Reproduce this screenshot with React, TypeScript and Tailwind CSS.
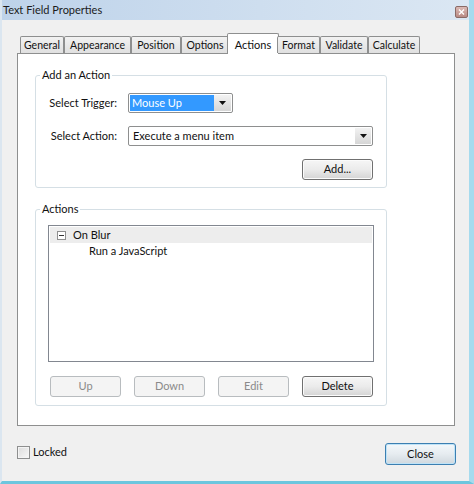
import React from "react";

const Arrow = () => (
  <svg width="7" height="4" viewBox="0 0 7 4">
    <path d="M0 0 H7 L3.5 4 Z" fill="#111" />
  </svg>
);

const Tab = ({ label, w }: { label: string; w: number }) => (
  <div
    style={{ width: w }}
    className="h-[17px] mb-[1px] border border-b-0 border-[#8e8f8f] rounded-t-[2px] bg-gradient-to-b from-[#f2f2f2] to-[#e0e0e0] flex items-center justify-center text-[10.5px] leading-none"
  >
    {label}
  </div>
);

const Btn = ({ label, disabled }: { label: string; disabled?: boolean }) =>
  disabled ? (
    <div className="w-[71px] h-[21px] border border-[#b8bcbf] rounded-[3px] bg-[#f4f4f4] flex items-center justify-center text-[#8a8a8a]">
      {label}
    </div>
  ) : (
    <div className="w-[71px] h-[21px] border border-[#707070] rounded-[3px] bg-gradient-to-b from-[#f6f6f6] via-[#ebebeb] to-[#d4d4d4] flex items-center justify-center shadow-[inset_0_0_0_1px_#fbfbfb]">
      {label}
    </div>
  );

export default function App() {
  return (
    <div className="w-[474px] h-[484px] bg-[#f0f0f0] flex flex-col font-[Lato,sans-serif] text-[11px] text-[#111] border-r-[5px] border-r-[#a6dbee] border-b-[3px] border-b-[#6cc6de] border-l-2 border-l-[#dbe6f0] overflow-hidden">
      {/* title bar */}
      <div className="h-[20px] shrink-0 bg-gradient-to-r from-[#bed3ea] to-[#dbe7f3] flex items-center justify-between pl-[1px] pr-[1px]">
        <span className="text-[11px] text-[#1b1b1b]">Text Field Properties</span>
        <div className="w-[13px] h-[12px] border border-[#8a6a66] rounded-[2px] bg-gradient-to-b from-[#dcbab5] to-[#b88a84] flex items-center justify-center mt-[4px]">
          <svg width="7" height="6" viewBox="0 0 7 6">
            <path d="M1 0.5 L6 5.5 M6 0.5 L1 5.5" stroke="#fff" strokeWidth="1.4" />
          </svg>
        </div>
      </div>

      {/* tabs */}
      <div className="mt-[13px] pl-[18px] flex items-end h-[21px] shrink-0 relative z-10">
        <Tab label="General" w={44} />
        <Tab label="Appearance" w={67} />
        <Tab label="Position" w={50} />
        <Tab label="Options" w={48} />
        <div className="w-[52px] -mx-[2px] h-[21px] border border-b-0 border-[#8e8f8f] rounded-t-[2px] bg-white flex items-start justify-center pt-[3px] text-[11px]">
          Actions
        </div>
        <Tab label="Format" w={43} />
        <Tab label="Validate" w={48} />
        <Tab label="Calculate" w={52} />
      </div>

      {/* panel */}
      <div className="ml-[15px] mt-[-1px] w-[438px] h-[373px] shrink-0 border border-[#8e8f8f] bg-white pl-[17px] pt-[14px]">
        <fieldset className="w-[352px] h-[120px] border border-[#d5dfe5] rounded-[3px] px-0 pb-0">
          <legend className="ml-[4px] px-[2px] leading-[14px]">Add an Action</legend>
          <div className="flex items-center mt-[11px] h-[20px]">
            <div className="w-[81px] text-right">Select Trigger:</div>
            <div className="ml-[11px] w-[105px] h-[20px] border border-[#8e8f8f] rounded-[2px] bg-white flex p-[1px]">
              <div className="flex-1 bg-[#3399ff] text-white flex items-center pl-[2px]">Mouse Up</div>
              <div className="w-[17px] bg-gradient-to-b from-[#f2f2f2] to-[#d6d6d6] flex items-center justify-center">
                <Arrow />
              </div>
            </div>
          </div>
          <div className="flex items-center mt-[13px] h-[20px]">
            <div className="w-[81px] text-right">Select Action:</div>
            <div className="ml-[11px] w-[245px] h-[20px] border border-[#8e8f8f] rounded-[2px] bg-white flex p-[1px]">
              <div className="flex-1 flex items-center pl-[3px]">Execute a menu item</div>
              <div className="w-[16px] bg-gradient-to-b from-[#f2f2f2] to-[#d6d6d6] flex items-center justify-center">
                <Arrow />
              </div>
            </div>
          </div>
          <div className="flex justify-end mt-[13px] pr-[13px]">
            <Btn label="Add..." />
          </div>
        </fieldset>

        <fieldset className="mt-[14px] w-[352px] h-[204px] border border-[#d5dfe5] rounded-[3px] px-0 pb-0">
          <legend className="ml-[4px] px-[2px] leading-[14px]">Actions</legend>
          <div className="ml-[12px] mt-[9px] w-[326px] h-[137px] border border-[#828790] bg-white p-[1px]">
            <div className="h-[16px] bg-[#ededed] flex items-center pl-[7px]">
              <div className="w-[9px] h-[9px] border border-[#8f8f8f] bg-white flex items-center justify-center">
                <div className="w-[5px] h-[1px] bg-[#333]" />
              </div>
              <span className="ml-[7px]">On Blur</span>
            </div>
            <div className="h-[17px] flex items-center pl-[39px]">Run a JavaScript</div>
          </div>
          <div className="flex gap-[13px] ml-[14px] mt-[14px]">
            <Btn label="Up" disabled />
            <Btn label="Down" disabled />
            <Btn label="Edit" disabled />
            <Btn label="Delete" />
          </div>
        </fieldset>
      </div>

      {/* bottom row */}
      <div className="flex items-start mt-[17px] pl-[15px] pr-[13px]">
        <div className="flex items-center mt-[1px]">
          <div className="w-[13px] h-[13px] border border-[#8e8f8f] bg-gradient-to-br from-[#dcdcdc] to-[#f8f8f8] shadow-[inset_0_0_0_1px_#f4f4f4]" />
          <span className="ml-[3px]">Locked</span>
        </div>
        <div className="ml-auto w-[71px] h-[22px] border border-[#3c7fb1] rounded-[3px] bg-gradient-to-b from-[#f4f8fb] via-[#e6ecf0] to-[#d0d8de] shadow-[inset_0_0_0_1px_#bfe3f7] flex items-center justify-center">
          Close
        </div>
      </div>
    </div>
  );
}
